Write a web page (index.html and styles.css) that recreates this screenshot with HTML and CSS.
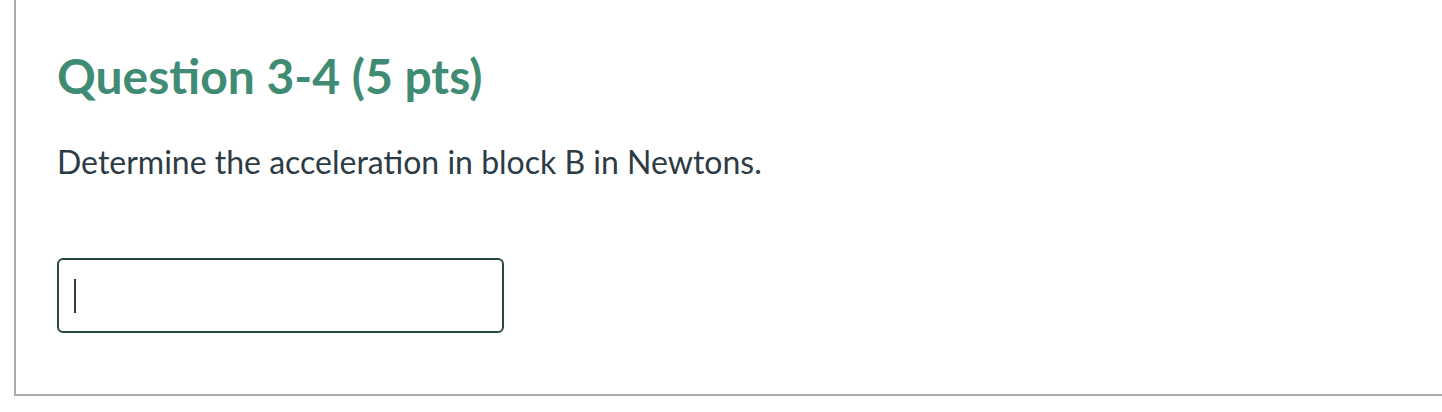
FILE: index.html
```html
<!DOCTYPE html>
<html>
<head>
<meta charset="utf-8">
<link rel="stylesheet" href="styles.css">
</head>
<body>
<div class="question">
  <h2 class="title">Question 3-4 (5 pts)</h2>
  <p class="text">Determine the acceleration in block B in Newtons.</p>
  <div class="answer"><span class="caret"></span></div>
</div>
</body>
</html>
```
FILE: styles.css
```css
html, body {
  margin: 0;
  padding: 0;
  background: #fff;
}
body {
  font-family: Lato, "Noto Sans", sans-serif;
  width: 1442px;
  height: 412px;
  overflow: hidden;
}
.question {
  margin-left: 14px;
  height: 396px;
  border-left: 2px solid #aaaaaa;
  border-bottom: 2px solid #aaaaaa;
  padding-left: 41px;
  box-sizing: border-box;
  display: flex;
  flex-direction: column;
  align-items: flex-start;
}
.title {
  margin: 47px 0 0 0;
  font-size: 48px;
  font-weight: 700;
  line-height: 58px;
  color: #408b74;
}
.text {
  margin: 37px 0 0 0;
  font-size: 32px;
  font-weight: 400;
  line-height: 40px;
  color: #2d3b45;
}
.answer {
  margin-top: 76px;
  width: 447px;
  height: 75px;
  box-sizing: border-box;
  border: 2px solid #264b3d;
  border-radius: 6px;
  display: flex;
  align-items: center;
  padding-left: 15px;
}
.caret {
  display: block;
  width: 2px;
  height: 34px;
  background: #2d3b45;
}
```
